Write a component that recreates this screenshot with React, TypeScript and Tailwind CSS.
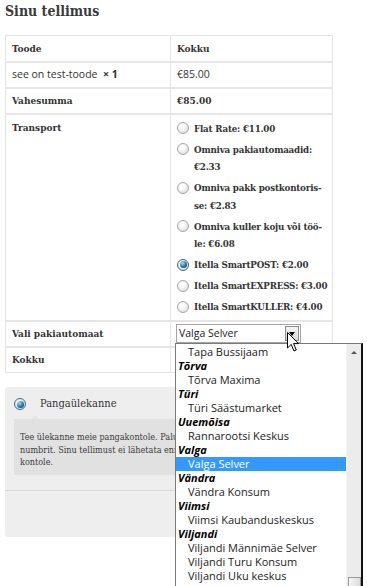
const slab = "font-['DejaVu_Serif',serif] font-stretch-condensed";
const sans = "font-['Open_Sans',sans-serif]";

type Option = { lines: string[]; checked?: boolean };

const shipping: Option[] = [
  { lines: ["Flat Rate: €11.00"] },
  { lines: ["Omniva pakiautomaadid:", "€2.33"] },
  { lines: ["Omniva pakk postkontoris-", "se: €2.83"] },
  { lines: ["Omniva kuller koju või töö-", "le: €6.08"] },
  { lines: ["Itella SmartPOST: €2.00"], checked: true },
  { lines: ["Itella SmartEXPRESS: €3.00"] },
  { lines: ["Itella SmartKULLER: €4.00"] },
];

// group labels are bold italic, places are indented
const terminals: { label: string; group?: boolean; selected?: boolean }[] = [
  { label: "Tapa Bussijaam" },
  { label: "Tõrva", group: true },
  { label: "Tõrva Maxima" },
  { label: "Türi", group: true },
  { label: "Türi Säästumarket" },
  { label: "Uuemõisa", group: true },
  { label: "Rannarootsi Keskus" },
  { label: "Valga", group: true },
  { label: "Valga Selver", selected: true },
  { label: "Vändra", group: true },
  { label: "Vändra Konsum" },
  { label: "Viimsi", group: true },
  { label: "Viimsi Kaubanduskeskus" },
  { label: "Viljandi", group: true },
  { label: "Viljandi Männimäe Selver" },
  { label: "Viljandi Turu Konsum" },
  { label: "Viljandi Uku keskus" },
  { label: "Võru", group: true },
];

function Radio({ checked }: { checked?: boolean }) {
  if (checked) {
    return (
      <span className="inline-flex h-[12px] w-[12px] shrink-0 items-center justify-center rounded-full border border-[#4d6475] bg-[radial-gradient(circle_at_40%_35%,#ffffff,#c9d3da)]">
        <span className="h-[7px] w-[7px] rounded-full bg-[radial-gradient(circle_at_35%_30%,#9fe0f7,#1d6f9c_60%,#0b3b5a)]" />
      </span>
    );
  }
  return (
    <span className="inline-block h-[12px] w-[12px] shrink-0 rounded-full border border-[#a8a8a8] bg-[radial-gradient(circle_at_40%_35%,#ffffff_20%,#d2d2d2)]" />
  );
}

export default function App() {
  return (
    <div className="relative h-[586px] w-[367px] overflow-hidden bg-white text-[#333]">
      <div className="pl-[5px] pr-[34px]">
        <h2 className={`${slab} h-[35px] pt-[1px] text-[14px] font-bold leading-[20px] text-[#3a3a3a]`}>
          Sinu tellimus
        </h2>

        <table className="w-full table-fixed border-collapse border border-[#e4e4e4] text-[10px]">
          <colgroup>
            <col className="w-[165px]" />
            <col />
          </colgroup>
          <tbody>
            <tr className="border-b-2 border-[#e6e6e6]">
              <td className={`${slab} h-[26px] border-r border-[#e6e6e6] px-[6px] font-bold`}>Toode</td>
              <td className={`${slab} px-[6px] font-bold`}>Kokku</td>
            </tr>
            <tr className="border-b-2 border-[#e6e6e6]">
              <td className={`${sans} h-[26px] border-r border-[#e6e6e6] px-[6px] text-[10.5px]`}>
                see on test-toode&nbsp; <span className="font-bold">× 1</span>
              </td>
              <td className={`${sans} px-[6px] text-[10.5px]`}>€85.00</td>
            </tr>
            <tr className="border-b-2 border-[#e6e6e6]">
              <td className={`${slab} h-[26px] border-r border-[#e6e6e6] px-[6px] font-bold`}>Vahesumma</td>
              <td className={`${slab} px-[6px] font-bold`}>€85.00</td>
            </tr>
            <tr className="border-b-2 border-[#e6e6e6]">
              <td className={`${slab} h-[207px] border-r border-[#e6e6e6] px-[6px] pt-[6px] align-top font-bold leading-[14px]`}>
                Transport
              </td>
              <td className="px-[6px] pt-[5px] pb-[2px] align-top">
                <ul className="flex flex-col gap-[3.5px]">
                  {shipping.map((o) => (
                    <li
                      key={o.lines[0]}
                      className={`${slab} whitespace-nowrap text-[9.7px] font-bold leading-[17.5px] tracking-[-0.2px]`}
                    >
                      <div className="flex items-center gap-[5px]">
                        <Radio checked={o.checked} />
                        <span>{o.lines[0]}</span>
                      </div>
                      {o.lines[1] && <div className="pl-[17px]">{o.lines[1]}</div>}
                    </li>
                  ))}
                </ul>
              </td>
            </tr>
            <tr className="border-b-2 border-[#e6e6e6]">
              <td className={`${slab} h-[26px] border-r border-[#e6e6e6] px-[6px] font-bold`}>Vali pakiautomaat</td>
              <td className="px-[5px]">
                <div className={`${sans} flex h-[19px] w-[125px] items-center justify-between border border-[#a5a5a5] bg-white pl-[2px] pr-[1px] text-[10.5px] text-[#222]`}>
                  <span>Valga Selver</span>
                  <span className="flex h-[15px] w-[14px] items-center justify-center border border-[#8c8c8c] bg-[linear-gradient(#f4f4f4,#d9d9d9)]">
                    <span className="h-0 w-0 border-x-[3px] border-t-[4px] border-x-transparent border-t-black" />
                  </span>
                </div>
              </td>
            </tr>
            <tr>
              <td className={`${slab} h-[26px] border-r border-[#e6e6e6] px-[6px] font-bold`}>Kokku</td>
              <td className={`${slab} px-[6px] font-bold`}>€87.00</td>
            </tr>
          </tbody>
        </table>

        <section className="mt-[14px] rounded-[3px] bg-[#efeeef]">
          <div className="px-[9px] pt-[11px] pb-[15px]">
            <label className={`${slab} flex items-center text-[11px] leading-[12px]`}>
              <Radio checked />
              <span className="ml-[14px]">Pangaülekanne</span>
            </label>
            <div className="relative mt-[9px] bg-[#e2e1e2] px-[6px] pt-[12px] pb-[6px]">
              <span className="absolute -top-[4px] left-[17px] h-0 w-0 border-x-[4px] border-b-[4px] border-x-transparent border-b-[#e6e5e6]" />
              <p className={`${slab} whitespace-nowrap text-[9px] leading-[12.5px] text-[#3a3a3a]`}>
                Tee ülekanne meie pangakontole. Palun kasuta viitenumbrina oma tellimuse
                <br />
                numbrit. Sinu tellimust ei lähetata enne, kui makse on laekunud meie
                <br />
                kontole.
              </p>
            </div>
          </div>
          <div className="h-[47px] border-t border-[#d9d9d9]" />
        </section>
      </div>

      {/* open native select list */}
      <div className="absolute left-[175px] top-[343px] flex h-[260px] w-[188px] border-y border-l border-r-2 border-[#7a7a7a] border-r-[#111] bg-white">
        <ul className={`${sans} flex-1 pt-[1px] text-[11px] leading-[14px] text-[#222]`}>
          {terminals.map((t) => (
            <li
              key={t.label}
              className={
                t.group
                  ? "pl-[2px] font-bold italic text-black"
                  : t.selected
                    ? "bg-[#3399ff] pl-[12px] text-white"
                    : "pl-[12px]"
              }
            >
              {t.label}
            </li>
          ))}
        </ul>
        <div className="flex w-[15px] flex-col items-center border-l border-[#f4f4f4] bg-[#ececec]">
          <span className="mt-[7px] h-0 w-0 border-x-[3px] border-b-[3px] border-x-transparent border-b-[#555]" />
          <span className="mt-[223px] h-[16px] w-[13px] border border-[#9a9a9a] bg-[linear-gradient(90deg,#f6f6f6,#dcdcdc)]" />
        </div>
      </div>

      {/* mouse pointer over the select button */}
      <svg className="absolute left-[287px] top-[332px]" width="13" height="21" viewBox="0 0 13 21">
        <path d="M0.5 0.5 L0.5 16 L4.2 12.4 L7 19 L9.3 18 L6.6 11.6 L11.5 11.6 Z" fill="#fff" stroke="#000" strokeWidth="1" strokeLinejoin="round" />
      </svg>
    </div>
  );
}
